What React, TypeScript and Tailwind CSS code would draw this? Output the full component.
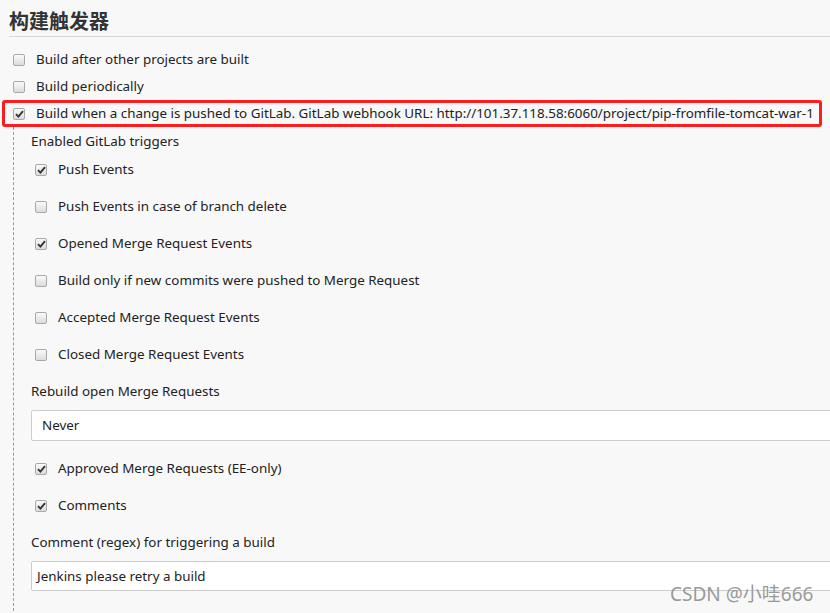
import React from "react";

function Box({ checked }: { checked?: boolean }) {
  return (
    <span className="inline-flex h-[12px] w-[12px] shrink-0 items-center justify-center rounded-[2px] border border-[#a9a9a9] bg-gradient-to-b from-[#fafafa] to-[#dcdcdc]">
      {checked && (
        <svg width="9" height="8" viewBox="0 0 9 8">
          <path d="M1 4.2 L3.4 6.6 L8 1.2" fill="none" stroke="#333" strokeWidth="1.9" />
        </svg>
      )}
    </span>
  );
}

function Row({ checked, label }: { checked?: boolean; label: string }) {
  return (
    <div className="flex h-[37px] items-center gap-[11px] pl-[4px]">
      <Box checked={checked} />
      <span>{label}</span>
    </div>
  );
}

export default function App() {
  return (
    <div
      className="relative h-[613px] w-[830px] overflow-hidden bg-[#f8f8f8] text-[13.4px] text-[#222]"
      style={{ fontFamily: '"Noto Sans", "Noto Sans CJK SC", sans-serif' }}
    >
      <div className="ml-[9px] border-b border-[#d8d8d8] pt-[7px] pb-[2px]">
        <h1
          className="text-[20px] font-bold leading-[27px] text-[#333]"
          style={{ fontFamily: '"Noto Sans CJK SC", sans-serif' }}
        >
          构建触发器
        </h1>
      </div>
      <div className="pt-[9px]">
        <div className="flex h-[27px] items-center gap-[11px] pl-[13px]">
          <Box />
          <span>Build after other projects are built</span>
        </div>
        <div className="flex h-[27px] items-center gap-[11px] pl-[13px]">
          <Box />
          <span>Build periodically</span>
        </div>
        <div className="ml-[2px] mr-[8px] flex h-[27px] items-center gap-[11px] whitespace-nowrap rounded-[3px] border-[3px] border-[#ff1c1c] pl-[8px]">
          <Box checked />
          <span>
            Build when a change is pushed to GitLab. GitLab webhook URL: http://101.37.118.58:6060/project/pip-fromfile-tomcat-war-1
          </span>
        </div>
        <div className="ml-[13px] border-l border-dashed border-[#999] pl-[17px] pt-[2px]">
          <div className="flex h-[24px] items-center">Enabled GitLab triggers</div>
          <div className="-mt-[2px]">
            <Row checked label="Push Events" />
            <Row label="Push Events in case of branch delete" />
            <Row checked label="Opened Merge Request Events" />
            <Row label="Build only if new commits were pushed to Merge Request" />
            <Row label="Accepted Merge Request Events" />
            <Row label="Closed Merge Request Events" />
          </div>
          <div className="flex h-[37px] items-center">Rebuild open Merge Requests</div>
          <div className="-mr-[4px] flex h-[31px] items-center rounded-[2px] border border-[#ccc] bg-white pl-[10px]">
            Never
          </div>
          <div className="pt-[9px]">
            <Row checked label="Approved Merge Requests (EE-only)" />
            <Row checked label="Comments" />
          </div>
          <div className="flex h-[37px] items-center">Comment (regex) for triggering a build</div>
          <div className="-mr-[4px] flex h-[30px] items-center rounded-[2px] border border-[#ccc] bg-white pl-[5px]">
            Jenkins please retry a build
          </div>
          <div className="h-[40px]" />
        </div>
      </div>
      <div
        className="absolute left-[670px] top-[582px] text-[19px] leading-[24px] text-[#9a9a9a]"
        style={{ fontFamily: '"Noto Sans", "Noto Sans CJK SC", sans-serif' }}
      >
        CSDN @小哇666
      </div>
    </div>
  );
}
